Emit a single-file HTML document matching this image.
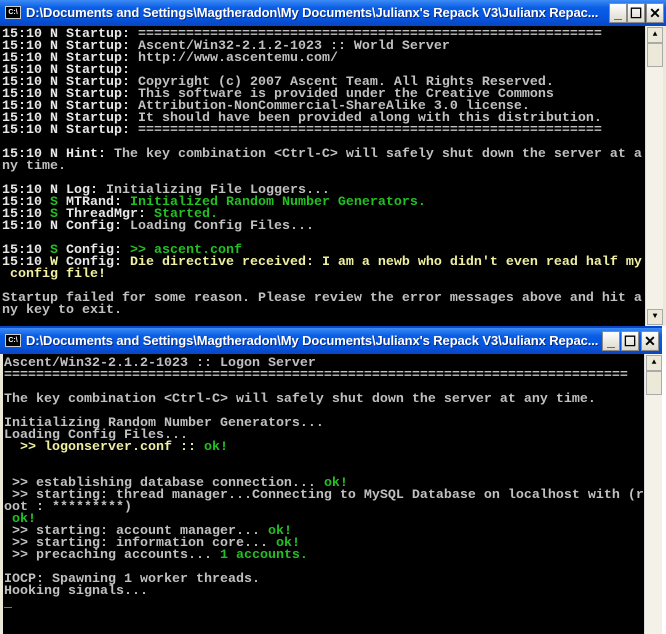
<!DOCTYPE html>
<html><head><style>
*{margin:0;padding:0;box-sizing:border-box}
body{width:666px;height:634px;overflow:hidden;background:#fff;position:relative;font-family:"Liberation Mono",monospace}
.tb{position:absolute;height:26px;background:linear-gradient(#3d8bf5,#0a5ee6 30%,#0654dd 70%,#0846c4);color:#fff;font:bold 13px "Liberation Sans",sans-serif;white-space:nowrap;overflow:hidden}
.tb .t{position:absolute;left:26px;top:5px;letter-spacing:-0.1px;text-shadow:1px 1px #0a2a80}
.ic{position:absolute;left:5px;top:6px;width:16px;height:13px;background:#000;border:1px solid #ccc;color:#fff;font:bold 7px "Liberation Sans";line-height:11px;text-align:center}
.btn{position:absolute;top:3px;width:18px;height:20px;background:linear-gradient(#fff,#dcd8cc);border:1px solid #8a8a8a;color:#000;font:bold 14px "Liberation Sans";text-align:center;line-height:18px}
.con{position:absolute;background:#000;overflow:hidden}
pre{font-family:"Liberation Mono",monospace;font-size:13.33px;line-height:12px;color:#c0c0c0;font-weight:bold;white-space:pre}
.w{color:#e8e8e8}.g{color:#22c022}.y{color:#f0f0a0}
.sb{position:absolute;width:18px;background:#f3f1e8;border-left:1px solid #ddd}
.ar{position:absolute;left:1px;width:16px;height:16px;background:#ece9d8;border:1px solid #aaa;font-size:8px;text-align:center;line-height:14px;color:#000}
.th{position:absolute;left:1px;width:16px;background:#ece9d8;border:1px solid #aaa}
</style></head><body>

<div class="tb" style="left:0;top:0;width:666px">
<div class="ic">C:\</div>
<div class="t">D:\Documents and Settings\Magtheradon\My Documents\Julianx's Repack V3\Julianx Repac...</div>
<div class="btn" style="left:609px">_</div><div class="btn" style="left:627px">☐</div><div class="btn" style="left:646px">✕</div>
</div>
<div style="position:absolute;left:0;top:26px;width:666px;height:300px;background:#ece9d8"></div>
<div class="con" style="left:0;top:26px;width:645px;height:300px">
<pre style="margin:3px 0 0 2px"><span class="w">15:10 N Startup: </span>==========================================================
<span class="w">15:10 N Startup: </span>Ascent/Win32-2.1.2-1023 :: World Server
<span class="w">15:10 N Startup: </span>http://www.ascentemu.com/
<span class="w">15:10 N Startup: </span>
<span class="w">15:10 N Startup: </span>Copyright (c) 2007 Ascent Team. All Rights Reserved.
<span class="w">15:10 N Startup: </span>This software is provided under the Creative Commons
<span class="w">15:10 N Startup: </span>Attribution-NonCommercial-ShareAlike 3.0 license.
<span class="w">15:10 N Startup: </span>It should have been provided along with this distribution.
<span class="w">15:10 N Startup: </span>==========================================================

<span class="w">15:10 N Hint: </span>The key combination &lt;Ctrl-C&gt; will safely shut down the server at a
ny time.

<span class="w">15:10 N Log: </span>Initializing File Loggers...
<span class="w">15:10 </span><span class="g">S</span><span class="w"> MTRand: </span><span class="g">Initialized Random Number Generators.</span>
<span class="w">15:10 </span><span class="g">S</span><span class="w"> ThreadMgr: </span><span class="g">Started.</span>
<span class="w">15:10 N Config: </span>Loading Config Files...

<span class="w">15:10 </span><span class="g">S</span><span class="w"> Config: </span><span class="g">&gt;&gt; ascent.conf</span>
<span class="w">15:10 </span><span class="y">W</span><span class="w"> Config: </span><span class="y">Die directive received: I am a newb who didn't even read half my
 config file!</span>

Startup failed for some reason. Please review the error messages above and hit a
ny key to exit.
</pre></div>
<div class="sb" style="left:645px;top:26px;height:300px">
<div class="ar" style="top:1px">▲</div><div class="th" style="top:17px;height:24px"></div><div class="ar" style="top:283px">▼</div></div>

<div style="position:absolute;left:0;top:326px;width:662px;height:308px;background:#0846c4"></div>
<div class="tb" style="left:0;top:328px;width:662px">
<div class="ic">C:\</div>
<div class="t">D:\Documents and Settings\Magtheradon\My Documents\Julianx's Repack V3\Julianx Repac...</div>
<div class="btn" style="left:602px">_</div><div class="btn" style="left:621px">☐</div><div class="btn" style="left:641px">✕</div>
</div>
<div style="position:absolute;left:0;top:354px;width:662px;height:280px;background:#ece9d8"></div>
<div class="con" style="left:3px;top:354px;width:641px;height:280px">
<pre style="margin:4px 0 0 1px">Ascent/Win32-2.1.2-1023 :: Logon Server
==============================================================================

The key combination &lt;Ctrl-C&gt; will safely shut down the server at any time.

Initializing Random Number Generators...
Loading Config Files...
<span class="y">  &gt;&gt; logonserver.conf :: </span><span class="g">ok!</span>


 &gt;&gt; establishing database connection... <span class="g">ok!</span>
 &gt;&gt; starting: thread manager...Connecting to MySQL Database on localhost with (r
oot : *********)
<span class="g"> ok!</span>
 &gt;&gt; starting: account manager... <span class="g">ok!</span>
 &gt;&gt; starting: information core... <span class="g">ok!</span>
 &gt;&gt; precaching accounts... <span class="g">1 accounts.</span>

IOCP: Spawning 1 worker threads.
Hooking signals...
_
</pre></div>
<div class="sb" style="left:644px;top:354px;height:280px">
<div class="ar" style="top:1px">▲</div><div class="th" style="top:17px;height:24px"></div></div>
</body></html>
